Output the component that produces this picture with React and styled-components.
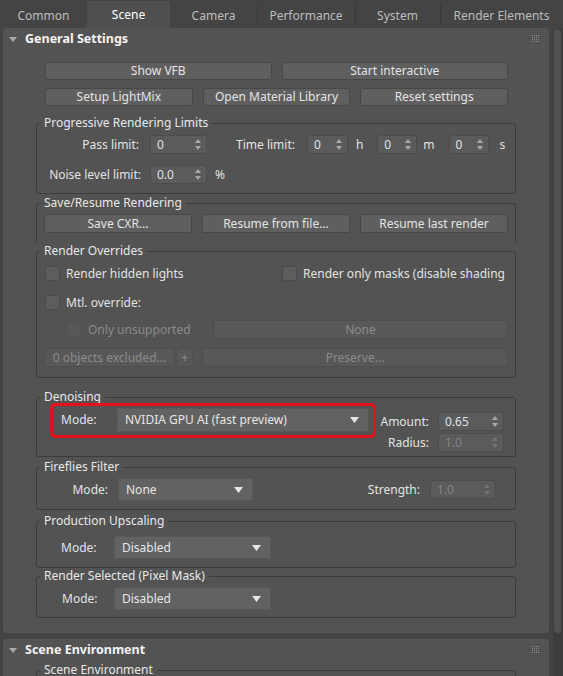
import React from 'react';
import styled, { createGlobalStyle } from 'styled-components';

const GlobalStyle = createGlobalStyle`
  html, body { margin: 0; padding: 0; background: #444444; overflow: hidden; }
  body {
    font-family: "Noto Sans", "Liberation Sans", sans-serif;
    font-size: 12px;
    line-height: 14px;
    color: #e0e0e0;
  }
  * { box-sizing: border-box; }
`;

const Window = styled.div`
  width: 563px;
  height: 676px;
  display: flex;
  flex-direction: column;
  background: #444444;
  overflow: hidden;
`;

const TabBar = styled.div`
  display: flex;
  height: 28px;
  flex-shrink: 0;
`;

const Tab = styled.div`
  position: relative;
  width: ${p => p.$w}px;
  display: flex;
  align-items: center;
  justify-content: center;
  padding-top: ${p => (p.$active ? 0 : 3)}px;
  margin-top: ${p => (p.$active ? 1 : 0)}px;
  color: ${p => (p.$active ? '#ffffff' : '#bdbdbd')};
  background: ${p => (p.$active ? '#4f4f4f' : 'transparent')};
  border-radius: 2px 2px 0 0;
  font-size: 12px;
  &::before {
    content: '';
    display: ${p => (p.$sep ? 'block' : 'none')};
    position: absolute;
    left: 0;
    top: 5px;
    bottom: 3px;
    width: 1px;
    background: #383838;
  }
`;

const Body = styled.div`
  flex: 1;
  display: flex;
  min-height: 0;
`;

const Column = styled.div`
  width: 546px;
  margin-left: 3px;
  display: flex;
  flex-direction: column;
  gap: 6px;
  overflow: hidden;
`;

const ScrollTrack = styled.div`
  width: 10px;
  margin-left: 4px;
  background: #3d3d3d;
  padding: 1px 2px 0 1px;
`;

const ScrollThumb = styled.div`
  height: 604px;
  background: #505050;
  border-radius: 3px;
`;

const Rollout = styled.section`
  flex-shrink: 0;
  background: #535353;
  border-radius: 4px;
  padding-bottom: ${p => p.$pb ?? 15}px;
`;

const RolloutHead = styled.div`
  height: 22px;
  display: flex;
  align-items: center;
  padding: 0 9px 0 6px;
  font-weight: 700;
  font-size: 12.5px;
  color: #f4f4f4;
  svg.tri { margin-right: 8px; }
  svg.grip { margin-left: auto; }
`;

const ButtonGrid = styled.div`
  display: grid;
  grid-template-columns: repeat(${p => p.$cols}, 1fr);
  gap: 10px;
  padding: ${p => p.$pad ?? '0 41px 0 42px'};
  margin-top: ${p => p.$mt ?? 0}px;
`;

const Button = styled.div`
  height: ${p => p.$h ?? 19}px;
  display: flex;
  align-items: center;
  justify-content: center;
  background: ${p => (p.$disabled ? '#585858' : '#5f5f5f')};
  border: 1px solid ${p => (p.$disabled ? '#4e4e4e' : '#474747')};
  border-radius: 3px;
  color: ${p => (p.$disabled ? '#8c8c8c' : '#e4e4e4')};
  white-space: nowrap;
  overflow: hidden;
  width: ${p => (p.$w ? `${p.$w}px` : 'auto')};
  flex: ${p => (p.$grow ? 1 : 'none')};
  margin-left: ${p => p.$ml ?? 0}px;
`;

const Group = styled.fieldset`
  margin: ${p => p.$mt ?? 0}px 33px 0 33px;
  padding: ${p => p.$pt}px 7px ${p => p.$pb}px 7px;
  border: 1px solid #3c3c3c;
  border-bottom: ${p => (p.$open ? 'none' : '1px solid #3c3c3c')};
  border-radius: ${p => (p.$open ? '3px 3px 0 0' : '3px')};
  min-width: 0;
`;

const Legend = styled.legend`
  padding: 0 4px;
  margin-left: -4px;
  font-size: 12px;
  line-height: 14px;
  color: #e8e8e8;
`;

const Row = styled.div`
  display: flex;
  align-items: ${p => p.$align ?? 'center'};
  height: ${p => p.$h}px;
  margin-top: ${p => p.$mt ?? 0}px;
  padding-left: ${p => p.$pl ?? 0}px;
`;

const CheckGrid = styled.div`
  display: grid;
  grid-template-columns: 237px minmax(0, 1fr);
  height: 15px;
  padding: 0 3px 0 1px;
  align-items: center;
`;

const Label = styled.span`
  width: ${p => (p.$w ? `${p.$w}px` : 'auto')};
  flex-shrink: 0;
  text-align: ${p => p.$align ?? 'left'};
  margin-right: ${p => p.$mr ?? 0}px;
  margin-left: ${p => p.$ml ?? 0}px;
  color: ${p => (p.$disabled ? '#8a8a8a' : '#e2e2e2')};
  white-space: nowrap;
`;

const Unit = styled.span`
  margin: 0 ${p => p.$mr}px 0 ${p => p.$ml}px;
  color: #e2e2e2;
`;

const SpinBox = styled.div`
  width: ${p => p.$w}px;
  height: 19px;
  flex-shrink: 0;
  display: flex;
  align-items: center;
  padding: 0 5px 0 6px;
  background: #5b5b5b;
  border: 1px solid #4c4c4c;
  border-radius: 2px;
  color: ${p => (p.$disabled ? '#858585' : '#dde3ea')};
  svg { margin-left: auto; }
`;

const Select = styled.div`
  width: ${p => (p.$w ? `${p.$w}px` : 'auto')};
  flex: ${p => (p.$w ? 'none' : 1)};
  height: ${p => p.$h ?? 23}px;
  display: flex;
  align-items: center;
  padding: 0 9px 0 7px;
  background: #626262;
  border: 1px solid #585858;
  color: #e6e6e6;
  svg { margin-left: auto; }
`;

const CheckItem = styled.div`
  display: flex;
  align-items: center;
  gap: 6px;
  width: ${p => (p.$w ? `${p.$w}px` : 'auto')};
  margin-left: ${p => p.$ml ?? 0}px;
  overflow: hidden;
  white-space: nowrap;
`;

const Box = styled.span`
  width: 15px;
  height: 15px;
  flex-shrink: 0;
  background: ${p => (p.$disabled ? '#575757' : '#5d5d5d')};
  border: 1px solid ${p => (p.$disabled ? '#515151' : '#4a4a4a')};
  border-radius: 1px;
`;

const Highlight = styled.div`
  position: relative;
  width: 326px;
  height: 35px;
  margin: -1px 0 0 6px;
  display: flex;
  align-items: center;
  padding: 2px 4px 3px 8px;
  border: 3px solid #e5101b;
  border-radius: 5px;
  flex-shrink: 0;
`;

const SideGrid = styled.div`
  display: grid;
  grid-template-columns: 49px 66px;
  column-gap: 9px;
  row-gap: 2px;
  align-items: center;
  margin: 8px 0 0 4px;
  span { text-align: right; }
`;

const Spacer = styled.div`
  flex: 1;
`;

const Arrows = ({ disabled }) => (
  <svg width="6" height="11" viewBox="0 0 6 11">
    <path d="M0 4 L3 0 L6 4 Z M0 7 L3 11 L6 7 Z" fill={disabled ? '#747474' : '#a8a8a8'} />
  </svg>
);

const Spin = ({ w, value, disabled }) => (
  <SpinBox $w={w} $disabled={disabled}>
    {value}
    <Arrows disabled={disabled} />
  </SpinBox>
);

const Drop = ({ w, h, value }) => (
  <Select $w={w} $h={h}>
    {value}
    <svg width="9" height="6" viewBox="0 0 9 6">
      <path d="M0 0 H9 L4.5 6 Z" fill="#e6e6e6" />
    </svg>
  </Select>
);

const Check = ({ label, disabled, w, ml }) => (
  <CheckItem $w={w} $ml={ml}>
    <Box $disabled={disabled} />
    <Label $disabled={disabled}>{label}</Label>
  </CheckItem>
);

const Head = ({ title }) => (
  <RolloutHead>
    <svg className="tri" width="8" height="5" viewBox="0 0 8 5">
      <path d="M0 0 H8 L4 5 Z" fill="#a9a9a9" />
    </svg>
    {title}
    <svg className="grip" width="8" height="8" viewBox="0 0 8 8">
      {[0, 2, 4, 6].map(y =>
        [0, 2, 4, 6].map(x => <rect key={`${x}-${y}`} x={x} y={y} width="1" height="1" fill="#8c8c8c" />)
      )}
    </svg>
  </RolloutHead>
);

const tabs = [
  { name: 'Common', w: 87 },
  { name: 'Scene', w: 83, active: true },
  { name: 'Camera', w: 87 },
  { name: 'Performance', w: 98, sep: true },
  { name: 'System', w: 85, sep: true },
  { name: 'Render Elements', w: 123, sep: true },
];

export default function App() {
  return (
    <Window>
      <GlobalStyle />
      <TabBar>
        {tabs.map(t => (
          <Tab key={t.name} $w={t.w} $active={t.active} $sep={t.sep}>{t.name}</Tab>
        ))}
      </TabBar>
      <Body>
        <Column>
          <Rollout>
            <Head title="General Settings" />
            <ButtonGrid $cols={2} $mt={12}>
              <Button $h={18}>Show VFB</Button>
              <Button $h={18}>Start interactive</Button>
            </ButtonGrid>
            <ButtonGrid $cols={3} $mt={8}>
              <Button $h={18}>Setup LightMix</Button>
              <Button $h={18}>Open Material Library</Button>
              <Button $h={18}>Reset settings</Button>
            </ButtonGrid>

            <Group $mt={10} $pt={5} $pb={9}>
              <Legend>Progressive Rendering Limits</Legend>
              <Row $h={19}>
                <Label $w={95} $align="right" $mr={11}>Pass limit:</Label>
                <Spin w={57} value="0" />
                <Label $ml={29} $mr={12}>Time limit:</Label>
                <Spin w={41} value="0" />
                <Unit $ml={8} $mr={14}>h</Unit>
                <Spin w={40} value="0" />
                <Unit $ml={6} $mr={14}>m</Unit>
                <Spin w={40} value="0" />
                <Unit $ml={11} $mr={0}>s</Unit>
              </Row>
              <Row $h={19} $mt={11}>
                <Label $w={97} $align="right" $mr={9}>Noise level limit:</Label>
                <Spin w={57} value="0.0" />
                <Unit $ml={8} $mr={0}>%</Unit>
              </Row>
            </Group>

            <Group $mt={2} $pt={4} $pb={10} $open>
              <Legend>Save/Resume Rendering</Legend>
              <ButtonGrid $cols={3} $pad="0">
                <Button>Save CXR...</Button>
                <Button>Resume from file...</Button>
                <Button>Resume last render</Button>
              </ButtonGrid>
            </Group>

            <Group $mt={1} $pt={8} $pb={10}>
              <Legend>Render Overrides</Legend>
              <CheckGrid>
                <Check label="Render hidden lights" />
                <Check label="Render only masks (disable shading)" />
              </CheckGrid>
              <Row $h={15} $mt={14} $pl={1}>
                <Check label="Mtl. override:" />
              </Row>
              <Row $h={19} $mt={10}>
                <Check label="Only unsupported" disabled w={146} ml={23} />
                <Button $disabled $grow>None</Button>
              </Row>
              <Row $h={19} $mt={9}>
                <Button $disabled $w={131}>0 objects excluded...</Button>
                <Button $disabled $w={17} $ml={1}>+</Button>
                <Button $disabled $grow $ml={9}>Preserve...</Button>
              </Row>
            </Group>

            <Group $mt={12} $pt={0} $pb={5}>
              <Legend>Denoising</Legend>
              <Row $h={47} $align="flex-start">
                <Highlight>
                  <Label $w={56}>Mode:</Label>
                  <Drop h={24} value="NVIDIA GPU AI (fast preview)" />
                </Highlight>
                <SideGrid>
                  <Label>Amount:</Label>
                  <Spin w={66} value="0.65" />
                  <Label>Radius:</Label>
                  <Spin w={66} value="1.0" disabled />
                </SideGrid>
              </Row>
            </Group>

            <Group $mt={3} $pt={4} $pb={8}>
              <Legend>Fireflies Filter</Legend>
              <Row $h={23}>
                <Label $w={64} $align="right" $mr={10}>Mode:</Label>
                <Drop w={135} value="None" />
                <Spacer />
                <Label $mr={10}>Strength:</Label>
                <Spin w={66} value="1.0" disabled />
                <Label $mr={12} />
              </Row>
            </Group>

            <Group $mt={4} $pt={8} $pb={8}>
              <Legend>Production Upscaling</Legend>
              <Row $h={23} $pl={17}>
                <Label $w={53}>Mode:</Label>
                <Drop w={157} value="Disabled" />
              </Row>
            </Group>

            <Group $mt={1} $pt={4} $pb={7}>
              <Legend>Render Selected (Pixel Mask)</Legend>
              <Row $h={23} $pl={18}>
                <Label $w={52}>Mode:</Label>
                <Drop w={157} value="Disabled" />
              </Row>
            </Group>
          </Rollout>

          <Rollout $pb={40}>
            <Head title="Scene Environment" />
            <Group $mt={2} $pt={20} $pb={10}>
              <Legend>Scene Environment</Legend>
            </Group>
          </Rollout>
        </Column>
        <ScrollTrack>
          <ScrollThumb />
        </ScrollTrack>
      </Body>
    </Window>
  );
}
